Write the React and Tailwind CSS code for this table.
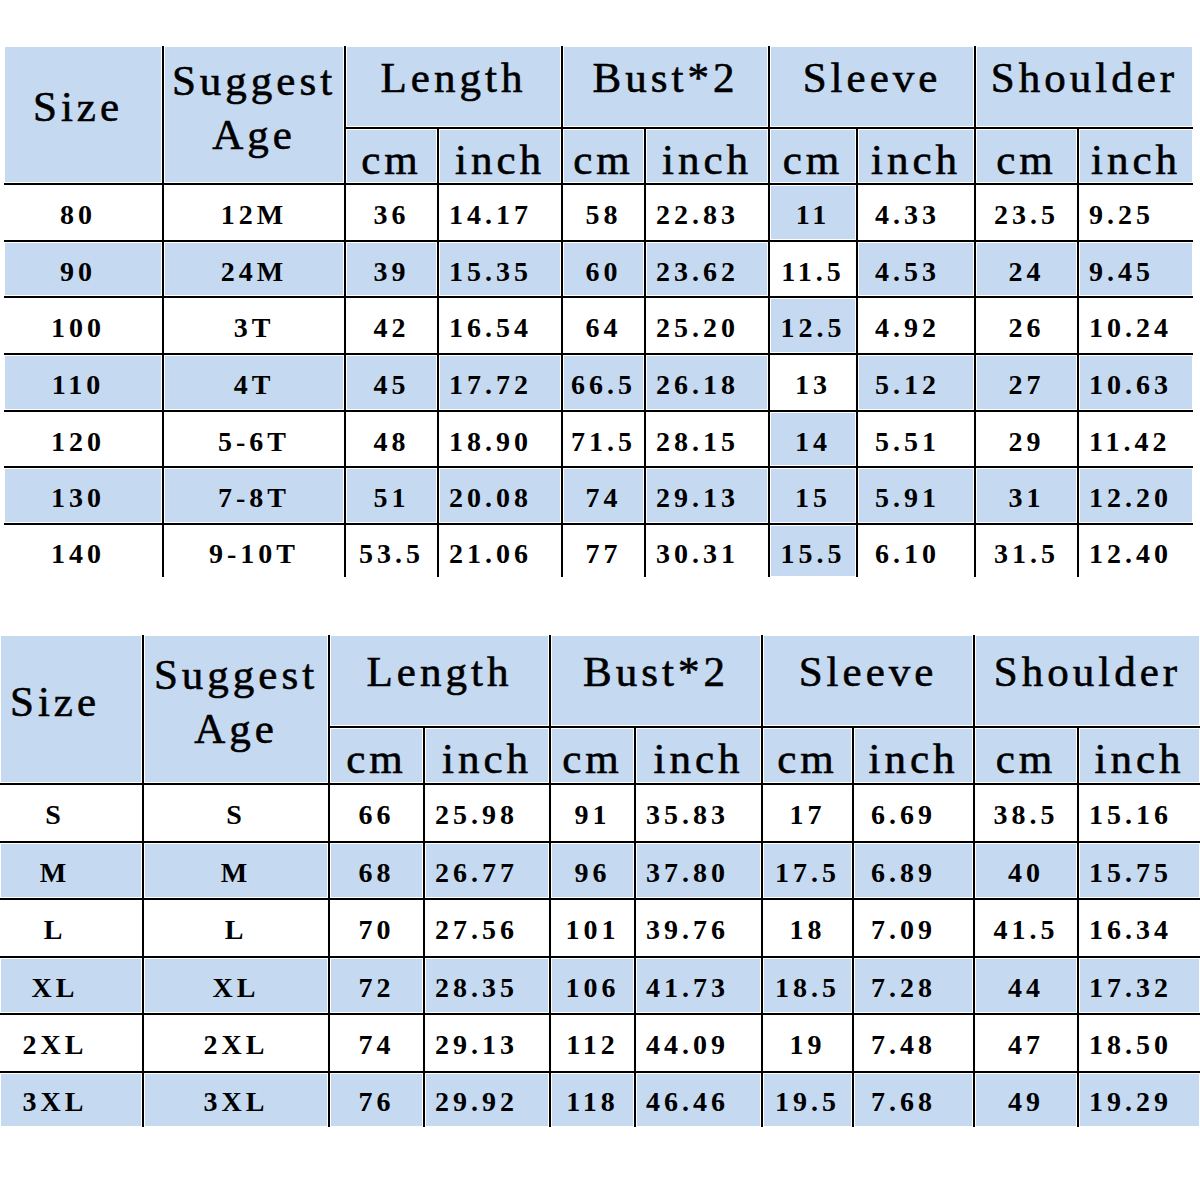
import React from "react";

const kids = [
  ["80", "12M", "36", "14.17", "58", "22.83", "11", "4.33", "23.5", "9.25"],
  ["90", "24M", "39", "15.35", "60", "23.62", "11.5", "4.53", "24", "9.45"],
  ["100", "3T", "42", "16.54", "64", "25.20", "12.5", "4.92", "26", "10.24"],
  ["110", "4T", "45", "17.72", "66.5", "26.18", "13", "5.12", "27", "10.63"],
  ["120", "5-6T", "48", "18.90", "71.5", "28.15", "14", "5.51", "29", "11.42"],
  ["130", "7-8T", "51", "20.08", "74", "29.13", "15", "5.91", "31", "12.20"],
  ["140", "9-10T", "53.5", "21.06", "77", "30.31", "15.5", "6.10", "31.5", "12.40"],
];

// sleeve cm column has its own shading in the first chart
const kidsSleeveBlue = [true, false, true, false, true, true, true];

const adults = [
  ["S", "S", "66", "25.98", "91", "35.83", "17", "6.69", "38.5", "15.16"],
  ["M", "M", "68", "26.77", "96", "37.80", "17.5", "6.89", "40", "15.75"],
  ["L", "L", "70", "27.56", "101", "39.76", "18", "7.09", "41.5", "16.34"],
  ["XL", "XL", "72", "28.35", "106", "41.73", "18.5", "7.28", "44", "17.32"],
  ["2XL", "2XL", "74", "29.13", "112", "44.09", "19", "7.48", "47", "18.50"],
  ["3XL", "3XL", "76", "29.92", "118", "46.46", "19.5", "7.68", "49", "19.29"],
];

const groups = ["Length", "Bust*2", "Sleeve", "Shoulder"];

const Cell = ({ blue, className = "", children }) => (
  <div
    className={`flex items-center border border-white ${
      blue ? "bg-[#c5d9f1]" : "bg-white"
    } ${className}`}
  >
    {children}
  </div>
);

// column alignment: index -> classes
const align = (i, first) => {
  if (i === 0) return first;
  if (i === 7) return "justify-start pl-[16px]";
  if (i === 3 || i === 5 || i === 9) return "justify-start pl-[9px]";
  return "justify-center";
};

const Head = ({ sizeClass }) => (
  <>
    <Cell blue className={`row-span-2 justify-center pb-[14px] ${sizeClass}`}>
      Size
    </Cell>
    <Cell blue className="row-span-2 justify-center pb-[14px] text-center leading-[54px]">
      Suggest
      <br />
      Age
    </Cell>
    {groups.map((g) => (
      <Cell key={g} blue className="col-span-2 justify-center pb-[16px]">
        {g}
      </Cell>
    ))}
    {groups.map((g) => (
      <React.Fragment key={g + "u"}>
        <Cell blue className="justify-center pt-[8px]">cm</Cell>
        <Cell blue className="justify-center pt-[8px]">inch</Cell>
      </React.Fragment>
    ))}
  </>
);

const SizeChart = ({ rows, gridClass, sleeveBlue, sizeHead, sizeCell }) => (
  <div
    className={`grid w-fit gap-[2px] bg-black text-[43px] tracking-[4px] text-black [-webkit-text-stroke:0.6px_black] ${gridClass}`}
  >
    <Head sizeClass={sizeHead} />
    {rows.map((row, r) =>
      row.map((v, i) => {
        let blue = r % 2 === 1;
        if (sleeveBlue && i === 6) blue = sleeveBlue[r];
        return (
          <Cell
            key={r + "-" + i}
            blue={blue}
            className={`pt-[5px] text-[28px] font-bold tracking-[4px] [-webkit-text-stroke:0px] ${align(i, sizeCell)}`}
          >
            {v}
          </Cell>
        );
      })
    )}
  </div>
);

export default function App() {
  return (
    <div className="w-[1200px] h-[1200px] bg-white font-serif">
      <div className="font-['Liberation_Serif'] pt-[46px]">
        <div className="pl-[4px]">
          <SizeChart
            rows={kids}
            sleeveBlue={kidsSleeveBlue}
            sizeHead="pr-[10px]"
            sizeCell="justify-center pr-[10px]"
            gridClass="grid-cols-[158px_180px_91px_122px_81px_122px_86px_116px_101px_114px] grid-rows-[81px_54px_repeat(6,54.7px)_52px]"
          />
        </div>
        <div className="mt-[58px]">
          <SizeChart
            rows={adults}
            sizeHead="pr-[32px]"
            sizeCell="justify-center pr-[32px]"
            gridClass="grid-cols-[142px_184px_93px_124px_83px_125px_89px_119px_102px_121px] grid-rows-[91px_55px_repeat(5,55.5px)_54px]"
          />
        </div>
      </div>
    </div>
  );
}
